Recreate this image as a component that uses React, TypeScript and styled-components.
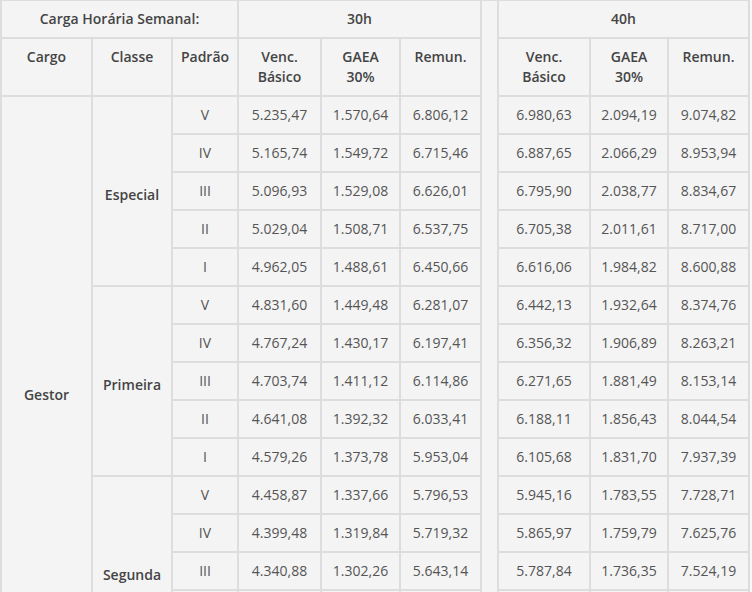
import React from "react";
import styled, { createGlobalStyle } from "styled-components";

const Global = createGlobalStyle`
  html, body { margin: 0; padding: 0; background: #f8f8f8; }
  body { font-family: "Open Sans", "Liberation Sans", sans-serif; }
`;

const Table = styled.table`
  border-collapse: collapse;
  table-layout: fixed;
  width: 750px;
  margin-top: -1px;
  background: #f4f4f4;
  font-family: "Open Sans", "Liberation Sans", sans-serif;
  font-size: 14px;
  line-height: 20px;
  color: #555;
`;

const Col = styled.col<{ $w: number }>`
  width: ${(p) => p.$w}px;
`;

const HeadRow = styled.tr<{ $h: number }>`
  height: ${(p) => p.$h}px;
`;

const BodyRow = styled.tr`
  height: 38px;
`;

const HeadCell = styled.th`
  border: 2px solid #dddddd;
  padding: 8px 6px;
  font-weight: 600;
  color: #444;
  text-align: center;
  vertical-align: top;
`;

const Cell = styled.td`
  border: 2px solid #dddddd;
  padding: 0 6px;
  text-align: center;
  vertical-align: middle;
  color: #555;
`;

const GroupCell = styled.td<{ $shift: number }>`
  border: 2px solid #dddddd;
  padding: ${(p) => p.$shift}px 6px 0;
  text-align: center;
  vertical-align: middle;
  font-weight: 600;
  color: #444;
`;

const Spacer = styled.td`
  border: 2px solid #dddddd;
  padding: 0;
`;

type Row = { p: string; a: string[]; b: string[] };
type Group = { name: string; shift: number; rows: Row[] };

const groups: Group[] = [
  {
    name: "Especial",
    shift: 8,
    rows: [
      { p: "V", a: ["5.235,47", "1.570,64", "6.806,12"], b: ["6.980,63", "2.094,19", "9.074,82"] },
      { p: "IV", a: ["5.165,74", "1.549,72", "6.715,46"], b: ["6.887,65", "2.066,29", "8.953,94"] },
      { p: "III", a: ["5.096,93", "1.529,08", "6.626,01"], b: ["6.795,90", "2.038,77", "8.834,67"] },
      { p: "II", a: ["5.029,04", "1.508,71", "6.537,75"], b: ["6.705,38", "2.011,61", "8.717,00"] },
      { p: "I", a: ["4.962,05", "1.488,61", "6.450,66"], b: ["6.616,06", "1.984,82", "8.600,88"] },
    ],
  },
  {
    name: "Primeira",
    shift: 8,
    rows: [
      { p: "V", a: ["4.831,60", "1.449,48", "6.281,07"], b: ["6.442,13", "1.932,64", "8.374,76"] },
      { p: "IV", a: ["4.767,24", "1.430,17", "6.197,41"], b: ["6.356,32", "1.906,89", "8.263,21"] },
      { p: "III", a: ["4.703,74", "1.411,12", "6.114,86"], b: ["6.271,65", "1.881,49", "8.153,14"] },
      { p: "II", a: ["4.641,08", "1.392,32", "6.033,41"], b: ["6.188,11", "1.856,43", "8.044,54"] },
      { p: "I", a: ["4.579,26", "1.373,78", "5.953,04"], b: ["6.105,68", "1.831,70", "7.937,39"] },
    ],
  },
  {
    name: "Segunda",
    shift: 8,
    rows: [
      { p: "V", a: ["4.458,87", "1.337,66", "5.796,53"], b: ["5.945,16", "1.783,55", "7.728,71"] },
      { p: "IV", a: ["4.399,48", "1.319,84", "5.719,32"], b: ["5.865,97", "1.759,79", "7.625,76"] },
      { p: "III", a: ["4.340,88", "1.302,26", "5.643,14"], b: ["5.787,84", "1.736,35", "7.524,19"] },
      { p: "II", a: ["4.283,06", "1.284,92", "5.567,98"], b: ["5.710,75", "1.713,23", "7.423,98"] },
      { p: "I", a: ["4.226,01", "1.267,80", "5.493,81"], b: ["5.634,68", "1.690,40", "7.325,08"] },
    ],
  },
];

const widths = [91, 80, 66, 83, 79, 81, 17, 92, 78, 81];
const totalRows = 2 + groups.reduce((n, g) => n + g.rows.length, 0);

export default function App() {
  return (
    <>
      <Global />
      <Table>
        <colgroup>
          {widths.map((w, i) => (
            <Col key={i} $w={w} />
          ))}
        </colgroup>
        <tbody>
          <HeadRow $h={38}>
            <HeadCell colSpan={3}>Carga Horária Semanal:</HeadCell>
            <HeadCell colSpan={3}>30h</HeadCell>
            <Spacer rowSpan={totalRows} />
            <HeadCell colSpan={3}>40h</HeadCell>
          </HeadRow>
          <HeadRow $h={58}>
            <HeadCell>Cargo</HeadCell>
            <HeadCell>Classe</HeadCell>
            <HeadCell>Padrão</HeadCell>
            <HeadCell>
              Venc.
              <br />
              Básico
            </HeadCell>
            <HeadCell>
              GAEA
              <br />
              30%
            </HeadCell>
            <HeadCell>Remun.</HeadCell>
            <HeadCell>
              Venc.
              <br />
              Básico
            </HeadCell>
            <HeadCell>
              GAEA
              <br />
              30%
            </HeadCell>
            <HeadCell>Remun.</HeadCell>
          </HeadRow>
          {groups.map((g, gi) =>
            g.rows.map((r, ri) => (
              <BodyRow key={`${gi}-${ri}`}>
                {gi === 0 && ri === 0 && (
                  <GroupCell $shift={28} rowSpan={15}>
                    Gestor
                  </GroupCell>
                )}
                {ri === 0 && (
                  <GroupCell $shift={g.shift} rowSpan={g.rows.length}>
                    {g.name}
                  </GroupCell>
                )}
                <Cell>{r.p}</Cell>
                {r.a.map((v, i) => (
                  <Cell key={`a${i}`}>{v}</Cell>
                ))}
                {r.b.map((v, i) => (
                  <Cell key={`b${i}`}>{v}</Cell>
                ))}
              </BodyRow>
            ))
          )}
        </tbody>
      </Table>
    </>
  );
}
